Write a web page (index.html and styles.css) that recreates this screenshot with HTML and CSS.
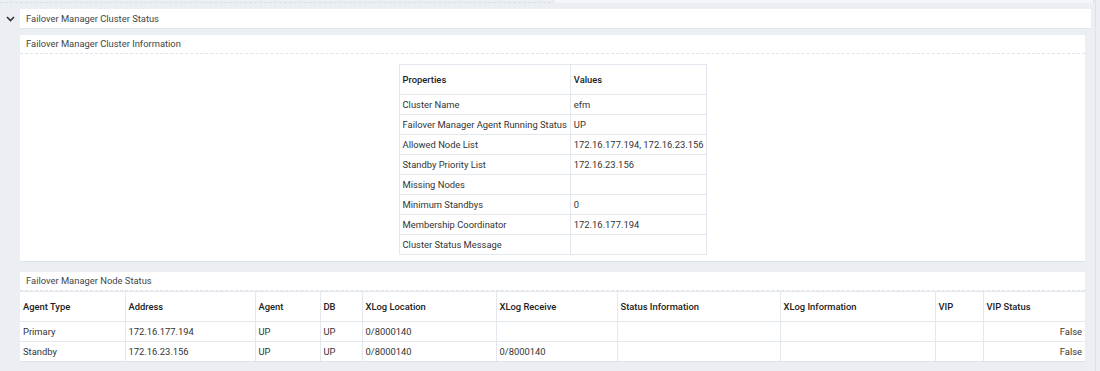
FILE: index.html
```html
<!DOCTYPE html>
<html lang="en">
<head>
  <meta charset="UTF-8" />
  <title>Failover Manager Cluster Status</title>
  <link rel="stylesheet" href="styles.css">
</head>
<body>
  <div class="page">
    <div class="top-strip">
      <div class="top-left"></div>
      <div class="top-right"></div>
    </div>

    <div class="section">
      <div class="toggle">
        <svg width="9" height="6" viewBox="0 0 9 6"><path d="M1 1 L4.5 4.5 L8 1" fill="none" stroke="#333" stroke-width="1.6"/></svg>
      </div>
      <div class="section-main">
        <div class="section-title">Failover Manager Cluster Status</div>

        <div class="section-body">
          <div class="panel">
            <div class="panel-title">Failover Manager Cluster Information</div>
            <div class="panel-body info-body">
              <table class="props">
                <tr><th>Properties</th><th>Values</th></tr>
                <tr><td>Cluster Name</td><td>efm</td></tr>
                <tr><td>Failover Manager Agent Running Status</td><td>UP</td></tr>
                <tr><td>Allowed Node List</td><td>172.16.177.194, 172.16.23.156</td></tr>
                <tr><td>Standby Priority List</td><td>172.16.23.156</td></tr>
                <tr><td>Missing Nodes</td><td></td></tr>
                <tr><td>Minimum Standbys</td><td>0</td></tr>
                <tr><td>Membership Coordinator</td><td>172.16.177.194</td></tr>
                <tr><td>Cluster Status Message</td><td></td></tr>
              </table>
            </div>
          </div>

          <div class="panel">
            <div class="panel-title">Failover Manager Node Status</div>
            <table class="nodes">
              <colgroup>
                <col style="width:105px"><col style="width:130px"><col style="width:65px"><col style="width:42px">
                <col style="width:134px"><col style="width:121px"><col style="width:163px"><col style="width:155px">
                <col style="width:48px"><col>
              </colgroup>
              <tr>
                <th>Agent Type</th><th>Address</th><th>Agent</th><th>DB</th><th>XLog Location</th>
                <th>XLog Receive</th><th>Status Information</th><th>XLog Information</th><th>VIP</th><th>VIP Status</th>
              </tr>
              <tr>
                <td>Primary</td><td>172.16.177.194</td><td>UP</td><td>UP</td><td>0/8000140</td>
                <td></td><td></td><td></td><td></td><td class="right">False</td>
              </tr>
              <tr>
                <td>Standby</td><td>172.16.23.156</td><td>UP</td><td>UP</td><td>0/8000140</td>
                <td>0/8000140</td><td></td><td></td><td></td><td class="right">False</td>
              </tr>
            </table>
          </div>
        </div>
      </div>
    </div>
  </div>
</body>
</html>
```

FILE: styles.css
```css
body {
  margin: 0;
  background-color: #ebeef3;
  font-family: Roboto, "Liberation Sans", sans-serif;
  font-size: 9.4px;
  color: #333;
}

.page {
  width: 1096px;
  height: 371px;
  border-right: 1px solid #dde1e8;
  box-sizing: border-box;
}

.top-strip {
  display: flex;
  height: 3px;
}

.top-left {
  width: 551px;
  border-bottom: 1px dashed #dadfe7;
}

.top-right {
  margin-left: 2px;
  width: 539px;
  background-color: #f5f6f9;
  border-left: 1px solid #dadfe7;
  border-right: 1px solid #dadfe7;
}

.section {
  display: flex;
  margin-top: 6px;
}

.toggle {
  width: 20px;
  height: 19px;
  display: flex;
  align-items: center;
  justify-content: center;
}

.section-main {
  width: 1071px;
}

.section-title {
  height: 19px;
  line-height: 19px;
  padding-left: 6px;
  background-color: #fff;
  border-bottom: 1px solid #e1e5ec;
  color: #444;
}

.section-body {
  padding: 6px 6px 0 0;
  display: flex;
  flex-direction: column;
  gap: 10px;
}

.panel {
  background-color: #fff;
  border-bottom: 1px solid #dde2ea;
}

.panel-title {
  height: 18px;
  line-height: 18px;
  padding-left: 6px;
  border-bottom: 1px dashed #e0e4eb;
  color: #444;
}

.info-body {
  display: flex;
  justify-content: center;
  padding: 10px 0 6px 0;
}

table {
  border-collapse: collapse;
}

.props th,
.props td {
  border: 1px solid #e3e7ee;
  text-align: left;
  padding: 0 3px;
  height: 19px;
  white-space: nowrap;
}

.props th {
  height: 29px;
  font-weight: 500;
  color: #222;
}

.props {
  width: 307px;
  margin-left: 1px;
}

.props td:first-child {
  width: 160px;
}

.nodes {
  width: 100%;
  table-layout: fixed;
}

.nodes th,
.nodes td {
  border: 1px solid #e3e7ee;
  text-align: left;
  padding: 0 3px;
  height: 19px;
  white-space: nowrap;
}

.nodes tr th:first-child,
.nodes tr td:first-child {
  border-left: none;
}

.nodes tr th:last-child,
.nodes tr td:last-child {
  border-right: none;
}

.nodes tr:last-child td {
  border-bottom: none;
}

.nodes th {
  height: 29px;
  font-weight: 500;
  color: #222;
}

.nodes td.right {
  text-align: right;
}
```
